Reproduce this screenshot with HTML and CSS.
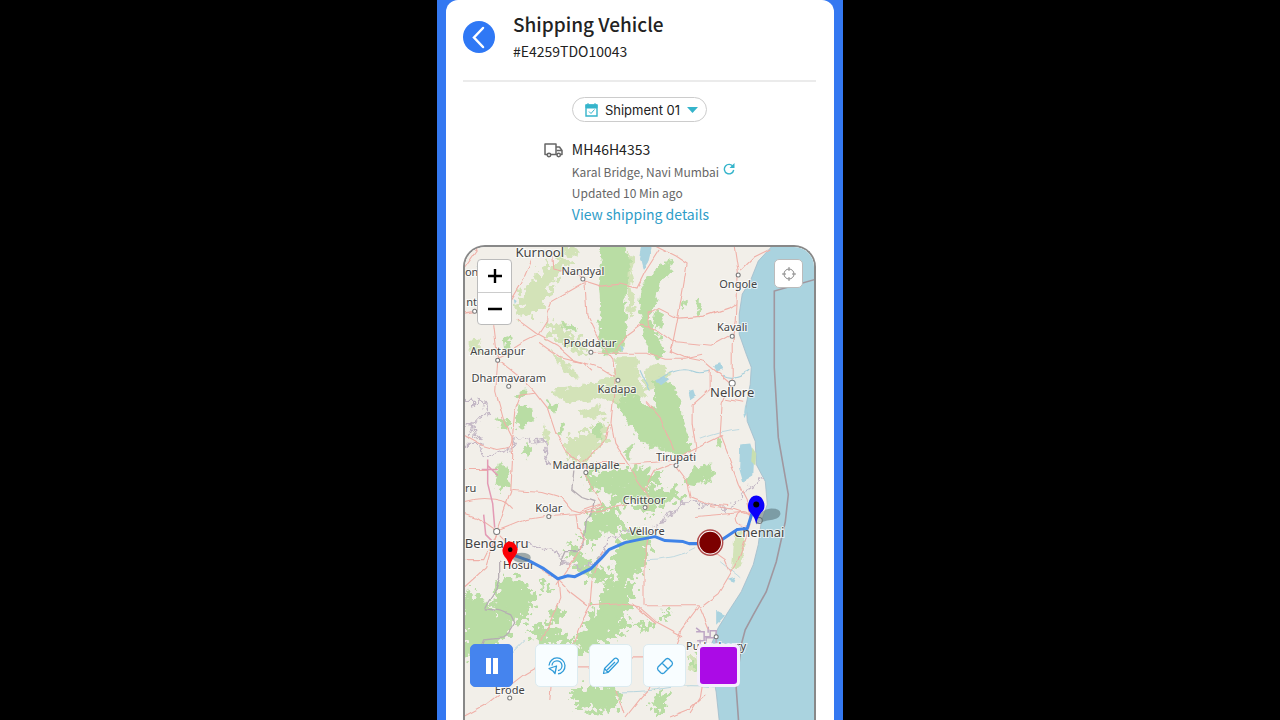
FILE: index.html
```html
<!DOCTYPE html>
<html lang="en">
<head>
  <meta charset="UTF-8">
  <meta name="viewport" content="width=device-width, initial-scale=1.0">
  <title>Shipping Vehicle</title>
  <link rel="stylesheet" href="styles.css">
</head>
<body>

  <div class="phone">
    <main class="card">
      <header class="header">
        <button type="button" class="back" aria-label="Back">
          <svg width="32" height="32" viewBox="0 0 32 32"><path d="M20 7l-9 9.500 9 9.500" fill="none" stroke="#fff" stroke-width="2.500" stroke-linecap="round"/></svg>
        </button>
        <div>
          <h1>Shipping Vehicle</h1>
          <p class="order-id">#E4259TDO10043</p>
        </div>
      </header>

      <button type="button" class="shipment">
        <svg width="13" height="14" viewBox="0 0 13 14"><path d="M1 2h11v11H1z" fill="none" stroke="#35b4cb" stroke-width="1.400"/><path d="M1 2h11v3H1zM3 0v3M10 0v3" fill="#35b4cb" stroke="#35b4cb"/><path d="M4 8.500l2 2 3.500-4" fill="none" stroke="#35b4cb"/></svg>
        <span>Shipment 01</span>
        <svg width="11" height="6" viewBox="0 0 11 6"><path d="M0 0h11L5.500 6z" fill="#35b4cb"/></svg>
      </button>

      <section class="vehicle">
        <svg class="truck" width="19" height="15" viewBox="0 0 19 15" fill="none" stroke="#666" stroke-width="1.500" stroke-linejoin="round"><path d="M3 11.500H1V1h11v10.500H7M12 4h3.500L18 7.500v4h-1.500M12 11.500h1"/><circle cx="5" cy="12" r="1.700"/><circle cx="14.700" cy="12" r="1.700"/><path d="M12.500 7.500H18"/></svg>
        <div>
          <p class="number">MH46H4353</p>
          <p class="place">Karal Bridge, Navi Mumbai
            <button type="button" class="refresh" aria-label="Refresh"><svg width="12" height="12" viewBox="0 0 12 12"><path d="M10 3.500A4.700 4.700 0 1 0 10.700 7" fill="none" stroke="#35b4cb" stroke-width="1.400"/><path d="M11.500 0v5h-5z" fill="#35b4cb"/></svg></button>
          </p>
          <p class="updated">Updated 10 Min ago</p>
          <a href="#details">View shipping details</a>
        </div>
      </section>

      <section class="map" aria-label="Route map">
        <svg class="tiles" viewBox="465 248 349 472" preserveAspectRatio="xMidYMin slice">
          <defs>
            <filter id="ragged" x="-5%" y="-5%" width="110%" height="110%">
              <feTurbulence type="fractalNoise" baseFrequency="0.140" numOctaves="3" seed="4"/>
              <feDisplacementMap in="SourceGraphic" scale="11" xChannelSelector="R" yChannelSelector="G"/>
            </filter>
            <filter id="speckled" x="-5%" y="-5%" width="110%" height="110%">
              <feTurbulence type="fractalNoise" baseFrequency="0.180" numOctaves="2" seed="7"/>
              <feDisplacementMap in="SourceGraphic" scale="26" xChannelSelector="R" yChannelSelector="G"/>
            </filter>
            <filter id="wavy" x="-5%" y="-5%" width="110%" height="110%">
              <feTurbulence type="fractalNoise" baseFrequency="0.060" numOctaves="2" seed="9"/>
              <feDisplacementMap in="SourceGraphic" scale="5" xChannelSelector="R" yChannelSelector="G"/>
            </filter>
          </defs>

          <rect x="460" y="240" width="370" height="490" fill="#f2efe9"/>

          <!-- scrub -->
          <g fill="#d3e3b8" filter="url(#speckled)">
            <path d="M517 306l8-18 18-18 22-12 4 10-14 14-10 22-14 14-12-2z"/>
            <path d="M545 322l18 6 18 14 8 14-16-4-24-18z"/>
            <path d="M566 440l20-6 18-14 6 16-14 14-10 14-20-6z"/>
          </g>
          <g fill="#d3e3b8" filter="url(#ragged)">
            <path d="M551 392l28-5 18-6 19-6 22 3 8 18-20 10-27-7-30 6z"/>
            <path d="M616 358l20 0 6 20-20 4-8-12zM562 248l14 0 4 8-14 3zM550 352l18 12 12 16-18-8z"/>
            <path d="M544 425l6 8-2 12-6-10zM580 412l20-6 6 10-18 4z"/>
            <path d="M644 372l16-8 10 10-8 14-18 4zM470 340l10-2 2 16-12-2z"/>
            <path d="M629 252l6 8-4 22 4 30-6 8-2-40z"/>
            <path d="M733 535l10-4 4 10-6 24-10 4zM690 655l12 4-4 14-10-4z"/>
          </g>

          <!-- forest -->
          <g fill="#b9dda4" filter="url(#ragged)">
            <path d="M600 247h24l6 14-2 20-3 22 2 22-4 26-18 6-8-14 4-30-2-26 3-22z"/>
            <path d="M641 288l10-14 10-8 12-4-2 10-12 14-2 16-8 17 10 20 6 14-8 8-10-12-5-22-4-16z"/>
            <path d="M653 380l18 4 10 16 2 22 6 16 0 16-14 2-18-8-14-14-12-14-8-14-6-14 8-2 20 14 12 8-4-16z"/>
            <path d="M616 402l14 2 14 10 2 18 12 14-10 4-12-16-8-10z"/>
            <path d="M561 322l14 5 2 6-12-2zM504 338l6-2 2 12-6 4zM516 393l12-2-2 7-8 1zM518 405l14 4 4 10-12 8-8-10z"/>
            <path d="M548 403l12 2-4 8-8-2zM497 418l10 2 4 8-10 2zM518 418l10 4-6 8-6-4zM560 422l4 2-2 10-4-2zM594 422l10 4-4 16-6-6z"/>
            <path d="M697 299l6 4-4 14-4-8zM683 300l3 4-2 6-3-6zM655 312l8 4-2 14-8-4zM630 444l4 2-6 14-4-6z"/>
            <path d="M500 463l8 4 2 18-8 8-6-12zM528 442l3 10-3 8-3-8zM716 440l6 0 0 8-6 0z"/>
            <path d="M686 480l8-14 6 4 2 10-6 8-10-2zM700 466l12-2 2 10-6 10-8-4z"/>
          </g>
          <g fill="#b9dda4" filter="url(#speckled)">
            <path d="M584 474l18-2 22-4 18 0 18 6 0 10-22 4-14-2-14 6-18-2z"/>
            <path d="M610 490l24-6 26 6 16 0 8 8-20 6-14 10-10-2-8-10-20 4z"/>
            <path d="M592 510l16-4 12 10 6 8-10 10-14 0-12 14-8-12z"/>
            <path d="M622 534l22-4 6 14-6 24-10 12-16-2-6-16z"/>
            <path d="M566 542l10 4 10 12 12 10 14 6-4 10-18-4-14-14z"/>
            <path d="M500 578l20 0 12 12 2 18-12 12-20 2-10-16z"/>
            <path d="M465 592l16 2 12 18 16 4 4 14-12 14-14 4-10 14-16-4z"/>
            <path d="M540 582l8 0 4 10-8 0zM548 610l14-2 4 8-14 8z"/>
            <path d="M606 580l20-2 8 12-4 18-10 16-18 4-10-12 8-16z"/>
            <path d="M590 614l20 0 18 8-6 14-20 8-20 14-10-4 6-18z"/>
            <path d="M526 628l18-2 18 6 14 10-16 4-22-4zM632 624l16-4 8 6-14 4zM662 610l8 0-2 12-6 0z"/>
            <path d="M572 692l14-6 24 0 14 10-8 12-24 4-16-6zM600 674l14 2 8 8-8 4z"/>
            <path d="M656 694l14-2-4 14-10 8-6-4zM594 650l12 0 4 14-8 4zM692 660l6 0 0 10-6 0z"/>
          </g>

          <!-- sea -->
          <path fill="#aad3df" stroke="#a3bccb" stroke-width="0.800" d="M773 240L771 248 758 262 750 282 742 295 739 315 739 335 746 355 751 368 750 385 746 405 747 422 755 442 756 465 765 482 767 505 761 522 758 545 753 565 741 592 728 612 718 628 711 645 711 668 716 692 720 730H830V240z"/>
          <g fill="#aad3df" filter="url(#wavy)">
            <path d="M740 445l10-1 4 12-1 20-10 6-4-14zM744 405l3 8-3 6-1-6zM726 580l10-2-2 5zM716 612l8 4-8 8zM642 247h10l-4 16-5 8-3-12z"/>
            <path d="M655 380l10-4 4 4-8 6zM688 392l6-2 2 6-6 4zM714 366l6-2 2 6-6 2zM514 300l3 2-2 3zM478 267l4 2-3 3zM620 347l4 2-2 4z"/>
          </g>
          <path fill="#c8dfb0" d="M752 448l4 6-1 12-4-4z"/>
          <g fill="none" stroke="#a9d0dc" stroke-width="1.200" filter="url(#wavy)">
            <path d="M656 382q10-8 20-11t16 0 18 0M722 376q12 6 28-6M640 370l10 22"/>
            <path d="M700 440q20-8 40-10M646 560q30 0 50-12M720 562l20 16" stroke-width="0.700"/>
            <path d="M618 692q30 0 50-4t46-1M510 655l14-14" stroke-width="0.800"/>
          </g>

          <!-- state borders -->
          <g fill="none" stroke="#c3b7c5" stroke-width="1.300" filter="url(#ragged)">
            <path d="M465 400h8v8l6-8 7 4 2 10-6 4-8 4-4 10-4 6M465 428l8-2 2 10 8 4M465 445h16l4 12 12-2 14-6 4-10 16-2v6l14-2 2 14 3 10"/>
            <path d="M526 542l10 4 8 4 8-2 8 8 4 8 16 4 14-4 10-12 4-10 8-6 14-6 14 4 14-6 10-12 12-8 8-8 10 6 16-2 12 6 12-8 10-14 16-10"/>
          </g>
          <g fill="none" stroke="#b5adb3" stroke-width="1.300" filter="url(#wavy)">
            <path d="M574 472l-2 18 10 8 12 4-2 14-6 8-2 22-8 6-10 0-6 14"/>
            <path d="M500 562v16l-4 12-8 12-3 6M485 609l16 2 10 4 4 8-6 10-6 4-18 2-4 10"/>
          </g>
          <path fill="none" stroke="#a0979f" stroke-width="1.600" d="M816 280L774 292V368L778 438 788 495 785 522 776 562 766 592 753 615 745 630 741 645 736 688 739 730"/>
          <g fill="none" stroke="#bda6c4" stroke-width="1.500"><path d="M696 632h8v5h6v-6h6v8M697 641h7v-4M706 644v-6h8M696 628l5 4M708 627v6M716 632v14M700 640v7"/></g>

          <!-- roads -->
          <g fill="none" stroke="#f0b0a8" stroke-width="1.100" filter="url(#wavy)">
            <path d="M465 268l14-20M532 260l-10 24-12 20M553 258l1 12 14 3 14 4M585 282l2 34 12 24 14 20 2 22-4 42M584 284l-14 8-18 10-5 12 0 8-9 14-16 8-16 10-8 4"/>
            <path d="M585 282l16 5 20-2 16 4 8-16 14-22M465 314l12-2M517 320l22 16 18 10 16 14 26 8 16 10M594 354h52M494 326l4 34M540 344l20 14 24 6 8 8"/>
            <path d="M498 362l-2 30 8 30 7 14M500 362l18 14 16 16 14 18 8 24 10 18 20 16M465 436l18 10 14 4 12-2 4-14 2-22 6-16 14-2"/>
            <path d="M655 247l20 10 12 8-4 24-6 34-6 30M650 330l-2-16 10-5 20 10 26-2 24-8 8-5M734 247l4 26-2 50-4 22 0 40M770 250l-16 8-14 14"/>
            <path d="M614 354l14-18 14-10 14 4 16 12 38 4 18-10M674 344l-4 8 14 6 20 4 26 22M646 354l18 6 20 0 18-4M710 370l0 20-18 16 0 18 4 26-2 8"/>
            <path d="M730 386l-8 18-2 32 10 26 8 22 8 16 4 18M722 436l-16 8-20 10-12 6-46 4M726 400l16 3M646 402l14 16 8 20 6 12M611 424l4 20 12 18 10 20 12 16 0 12"/>
            <path d="M586 474l6 16 10 14-22 8M610 426l-4 14-22 22 4 12M625 463h-36M644 490l10-18 20-8 12 16 4 18 16 6 22 2"/>
            <path d="M465 470h22M511 436l2 20-2 36-14 40M512 490l30 2 20 6 10 12 14 4 28-6 16-4M497 532l-20-14-12-4M497 532l30-12 24-4 28-2 26-8"/>
            <path d="M465 502q20-6 40 0l8 8M497 534l-10 34-22 20M500 536l20 20 18 10 20 14 12 12 18 14M576 514l2 14 8 12-12 20-18 26"/>
            <path d="M558 578l2 20-8 20-10 24M602 552l-10 30-2 24-10 20-8 20M590 606l30-2 20 4 16 14 26 14M645 606h54l10 24M699 606l-18 24-10 26-4 18"/>
            <path d="M648 538l-4 24 0 44M710 550l14 10 6 14M750 524l-12 36-20 34-16 12M465 716l22-12 20-16 18-14 24-14M548 662l4 16-2 22M578 667h40M632 658h30"/>
            <path d="M616 690l8 24M665 672l-24 26-16 20M670 717l20-8 16-14M690 714l10-16 4-24M632 604l24 20M752 516l-18-6-24-4M742 513l-46 4M465 560l20 0 12-24"/>
            <circle cx="743" cy="519" r="7"/>
          </g>
          <g fill="none" stroke="#e39ab4" stroke-width="1.500"><path d="M488 460v24l5 20 2 24M482 470h16M488 466l10 10M484 515l2 20 6 6"/></g>

          <!-- towns -->
          <g fill="#fff" stroke="#777" stroke-width="1">
            <circle cx="583" cy="280" r="2"/><circle cx="591" cy="353" r="2"/><circle cx="738" cy="276" r="2"/><circle cx="732" cy="337" r="2"/><circle cx="498" cy="361" r="2"/><circle cx="509" cy="387" r="2"/><circle cx="618" cy="381" r="2"/><circle cx="732" cy="384" r="3"/><circle cx="676" cy="466" r="2"/><circle cx="586" cy="473" r="2"/><circle cx="549" cy="517" r="2"/><circle cx="645" cy="508" r="2"/><circle cx="497" cy="532" r="3"/><circle cx="510" cy="698" r="2"/><circle cx="716" cy="637" r="2"/><circle cx="759" cy="521" r="3"/><circle cx="475" cy="312" r="2"/>
          </g>
          <g class="labels">
            <g class="town">
              <text x="583" y="276">Nandyal</text>
              <text x="738" y="289">Ongole</text>
              <text x="732" y="332">Kavali</text>
              <text x="590" y="348">Proddatur</text>
              <text x="498" y="356">Anantapur</text>
              <text x="509" y="383">Dharmavaram</text>
              <text x="617" y="394">Kadapa</text>
              <text x="676" y="462">Tirupati</text>
              <text x="586" y="470">Madanapalle</text>
              <text x="644" y="504">Chittoor</text>
              <text x="549" y="512">Kolar</text>
              <text x="647" y="535">Vellore</text>
              <text x="519" y="569">Hosur</text>
              <text x="716" y="650">Puducherry</text>
              <text x="510" y="694">Erode</text>
              <text x="472" y="277">on</text>
              <text x="472" y="307">nt</text>
              <text x="471" y="492">ru</text>
            </g>
            <g class="city">
              <text x="540" y="258">Kurnool</text>
              <text x="732" y="398">Nellore</text>
              <text x="497" y="548">Bengaluru</text>
              <text x="759" y="537">Chennai</text>
            </g>
          </g>

          <!-- route and markers -->
          <path class="route" d="M515 556l14 5 15 8 14 10 10-3 7 1 16-8 10-10 8-9 16-7 14-3 16-3 10 4 18 1 6 2 14 0 7 2M722 540l15-10 10-1 5-16"/>
          <g fill="#4d666b" opacity="0.500"><ellipse cx="522" cy="558" rx="9" ry="5"/><path d="M756 524q2-14 15-15 10 0 9 6-1 5-13 6z"/></g>
          <path d="M510 568q-1-7-5-11-3-4-2-8 2-7 7-7t8 7q0 4-3 8-4 4-5 11z" fill="#fb0006"/>
          <circle cx="510.500" cy="550" r="2.300"/>
          <path d="M756 525q-1-7-6-12-3-3-2-9 2-8 8-8t8 8q1 6-3 9-4 5-5 12z" fill="#0b00fb"/>
          <circle cx="756" cy="505" r="3"/>
          <circle cx="710" cy="543" r="12.500" fill="#fff" stroke="#b04a4a" stroke-width="1.500"/>
          <circle cx="710" cy="543" r="10.800" fill="#7c0000"/>
        </svg>

        <div class="zoom">
          <button type="button" aria-label="Zoom in"><svg width="14" height="14" viewBox="0 0 14 14"><path d="M7 0v14M0 7h14" stroke="#000" stroke-width="2.400"/></svg></button>
          <button type="button" aria-label="Zoom out"><svg width="14" height="14" viewBox="0 0 14 14"><path d="M0 7h14" stroke="#000" stroke-width="2.400"/></svg></button>
        </div>

        <button type="button" class="locate" aria-label="Locate"><svg width="14" height="14" viewBox="0 0 14 14" fill="none" stroke="#888"><circle cx="7" cy="7" r="5"/><path d="M7 0v4M7 10v4M0 7h4M10 7h4"/></svg></button>

        <div class="tools">
          <button type="button" class="pause" aria-label="Pause"><svg width="12" height="16" viewBox="0 0 12 16" fill="#fff"><path d="M0 0h5v16H0zM7 0h5v16H7z"/></svg></button>
          <button type="button" aria-label="Replay"><svg width="18" height="18" viewBox="0 0 18 18" fill="none" stroke="#2f9bd8" stroke-width="1.300"><path d="M1 8.500a8 8 0 1 1 9 8.400M4 8.500a5 5 0 1 1 6 5.200" /><path d="M1 11.500l7.500-2.500L7 16.500l-2-2.500z" stroke-linejoin="round"/></svg></button>
          <button type="button" aria-label="Draw"><svg width="18" height="18" viewBox="0 0 18 18" fill="none" stroke="#2f9bd8" stroke-width="1.200" stroke-linejoin="round"><path d="M1.500 16.500l1-5L12.500 1.500q1.500-1 3 .5t.5 3L6 15.500zM2.500 11.500L6 15.500M5 13l8-8"/></svg></button>
          <button type="button" aria-label="Erase"><svg width="18" height="18" viewBox="0 0 18 18" fill="none" stroke="#2f9bd8" stroke-width="1.300" stroke-linejoin="round"><path d="M2 10l8-8q1.500-1 3 0l3 3q1 1.500 0 3l-8 8q-1.500 1-3 0l-3-3q-1-1.500 0-3zM6 6l6 6"/></svg></button>
          <input type="color" value="#ab0be6" aria-label="Pen colour">
        </div>
      </section>
    </main>
  </div>

</body>
</html>
```
FILE: styles.css
```css
* {
  box-sizing: border-box;
}

body {
  margin: 0;
  background-color: #000;
  color: #222;
  font-family: "Noto Sans CJK SC", "Noto Sans", sans-serif;
}

h1,
p {
  margin: 0;
  font-weight: 400;
}

button {
  padding: 0;
  border: none;
  background: none;
  font-family: inherit;
  color: inherit;
  cursor: pointer;
}

svg {
  display: block;
}

.phone {
  display: flex;
  max-width: 406px;
  height: 100vh;
  margin: 0 auto;
  padding: 0 9px;
  background-color: #3478f1;
  overflow: hidden;
}

.card {
  display: flex;
  flex-direction: column;
  flex: 1;
  min-width: 0;
  padding: 0 18px 0 17px;
  background-color: #fff;
  border-radius: 12px 12px 0 0;
}

.header {
  display: flex;
  align-items: center;
  gap: 18px;
  height: 82px;
  padding-bottom: 7px;
  border-bottom: 2px solid #ebebeb;
}

.back {
  width: 32px;
  height: 32px;
  border-radius: 50%;
  background-color: #2f78f5;
}

h1 {
  font-size: 19px;
  font-weight: 500;
  line-height: 28px;
}

.order-id {
  font-size: 14px;
  line-height: 26px;
}

.shipment {
  display: flex;
  align-items: center;
  align-self: center;
  gap: 7px;
  height: 25px;
  margin-top: 15px;
  padding: 0 8px 0 12px;
  border: 1px solid #ccc;
  border-radius: 13px;
  font-family: Inter, sans-serif;
  font-size: 13px;
}

.vehicle {
  display: flex;
  align-self: center;
  gap: 9px;
  margin: 15px 0 20px;
}

.truck {
  margin-top: 6px;
}

.number {
  font-size: 14px;
  line-height: 24px;
}

.place,
.updated {
  color: #666;
  font-size: 12px;
  line-height: 21px;
}

.place {
  display: flex;
  gap: 4px;
}

.refresh {
  align-self: flex-start;
  margin-top: 2px;
}

.vehicle a {
  display: block;
  color: #2e9dc8;
  font-size: 14px;
  line-height: 22px;
  text-decoration: none;
}

.map {
  position: relative;
  flex: 1;
  min-height: 0;
  border: 2px solid #888;
  border-bottom: none;
  border-radius: 22px 22px 0 0;
  overflow: hidden;
}

.tiles {
  width: 100%;
  height: 100%;
}

.labels {
  fill: #444;
  stroke: #fff;
  stroke-opacity: 0.7;
  stroke-width: 2px;
  paint-order: stroke;
  text-anchor: middle;
  font-family: "Noto Sans", sans-serif;
}

.town {
  font-size: 11px;
}

.city {
  font-size: 13px;
}

.route {
  fill: none;
  stroke: #3f83e8;
  stroke-width: 3px;
  stroke-linejoin: round;
}

.zoom {
  position: absolute;
  top: 12px;
  left: 12px;
  width: 35px;
  border: 1px solid #bbb;
  border-radius: 4px;
  background-color: #fff;
  overflow: hidden;
}

.zoom button {
  display: grid;
  place-items: center;
  width: 100%;
  height: 32px;
}

.zoom button + button {
  border-top: 1px solid #ccc;
}

.locate {
  position: absolute;
  top: 12px;
  right: 11px;
  display: grid;
  place-items: center;
  width: 29px;
  height: 29px;
  border: 1px solid #bbb;
  border-radius: 5px;
  background-color: #fff;
}

.tools {
  position: absolute;
  bottom: 33px;
  left: 5px;
  display: flex;
  gap: 11px;
}

.tools button,
.tools input {
  display: grid;
  place-items: center;
  width: 43px;
  height: 43px;
  border: 1px solid #dcebf0;
  border-radius: 5px;
  background-color: #f8fdff;
}

.tools .pause {
  margin-right: 11px;
  border-color: #4584ee;
  background-color: #4584ee;
}

.tools input {
  display: block;
  padding: 3px;
  border: none;
  background-color: #f5eefc;
}

.tools input::-webkit-color-swatch-wrapper {
  padding: 0;
}

.tools input::-webkit-color-swatch {
  border: none;
  border-radius: 3px;
}
```
